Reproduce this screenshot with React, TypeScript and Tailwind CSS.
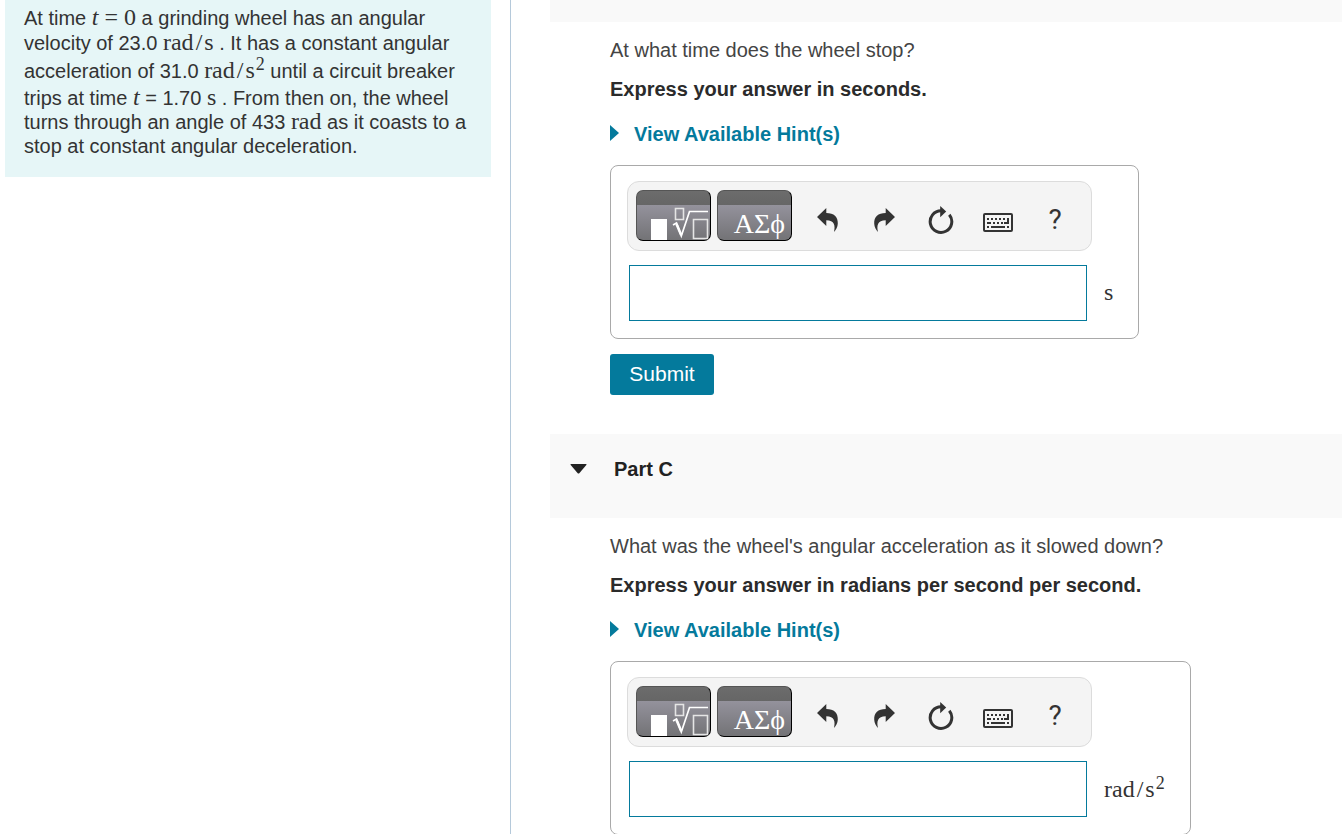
import type { ReactNode } from "react";

function Unit({ squared = false }: { squared?: boolean }) {
  return (
    <span className={squared ? "inline-block pt-[3px] pb-1 font-['Liberation_Serif',serif] text-2xl leading-6 text-[#333]" : "inline-block font-['Liberation_Serif',serif] text-2xl leading-6 text-[#333]"}>
      rad<span className="mx-0.5">/</span>s
      {squared && <sup className="relative -top-2 ml-px align-baseline text-lg leading-0">2</sup>}
    </span>
  );
}

function Symbol({ children, italic = false }: { children: ReactNode; italic?: boolean }) {
  return (
    <span className={italic ? "font-['Liberation_Serif',serif] text-2xl leading-0 text-[#333] italic" : "font-['Liberation_Serif',serif] text-2xl leading-0 text-[#333]"}>
      {children}
    </span>
  );
}

function TemplateIcon() {
  return (
    <svg viewBox="0 0 73 49" className="block h-full w-full" fill="none" stroke="#fff" aria-hidden="true">
      <path d="M14 28h16v21H14z" fill="#fff" stroke="none" />
      <path d="M38.500 17.500h8v11h-8z" stroke="#e5e5e5" strokeWidth="1.6" />
      <path d="M36 34l3.500-2 4.800 13L52.500 20.500H71" strokeWidth="1.7" />
      <path d="M39.500 33l4.700 11" strokeWidth="2.6" />
      <path d="M56.500 28.500h14v19h-14z" stroke="#e5e5e5" strokeWidth="1.6" />
    </svg>
  );
}

function UndoIcon({ flip = false }: { flip?: boolean }) {
  return (
    <svg viewBox="0 0 21 24" className={flip ? "h-6 w-[21px] -scale-x-100" : "h-6 w-[21px]"} fill="#333" aria-hidden="true">
      <path d="M0 9L9.300 0V5C17 5 21 9 20.800 15.500C20.700 19 19 22 17 24C18.500 17.500 17.500 12.300 9.300 12.300V18z" />
    </svg>
  );
}

function ResetIcon() {
  return (
    <svg viewBox="0 0 26 28" className="h-7 w-[26px]" aria-hidden="true">
      <path d="M13 4.800A10.800 10.800 0 1 0 21.300 8.700" fill="none" stroke="#333" strokeWidth="3" />
      <path d="M12.200 0v11.200l6-5.800z" fill="#333" />
    </svg>
  );
}

function KeyboardIcon() {
  return (
    <svg viewBox="0 0 30 19" className="h-[19px] w-[30px]" fill="none" stroke="#333" aria-hidden="true">
      <rect x="1" y="1" width="28" height="17" rx="1" strokeWidth="2" />
      <path d="M4 6h18M4 14h2M24 14h2" strokeWidth="2" strokeDasharray="2 2" />
      <path d="M4 10h4M10 10h2M14 10h2M18 10h2M8 14h14M21 10h5M25 5v6" strokeWidth="2" />
    </svg>
  );
}

const paletteClass =
  "h-[51px] w-[75px] shrink-0 rounded-[7px] border border-t-[#555] border-l-[#555] border-r-black border-b-black bg-[linear-gradient(#6c6c6c_0,#666_14px,#94929c_14px,#737376_100%)]";
const toolClass = "flex h-10 w-14 shrink-0 items-center justify-center";

function AnswerBox({ id, unit }: { id: string; unit: ReactNode }) {
  return (
    <div className="w-fit rounded-lg border border-[#a9a9a9] px-4 pt-[15px] pb-[17px]">
      <div role="toolbar" aria-label="Equation tools" className="flex h-[70px] w-[465px] items-start rounded-xl border border-[#dcdcdc] bg-[#f4f4f4] px-2 pt-2">
        <button aria-label="Templates" className={paletteClass}><TemplateIcon /></button>
        <button aria-label="Symbols" className={`${paletteClass} ml-1.5 flex items-end justify-end pr-1.5 font-['Liberation_Serif',serif] text-[28px] leading-8 text-white`}>
          ΑΣϕ
        </button>
        <div className="ml-[7px] flex items-center gap-px pt-2.5">
          <button aria-label="Undo" className={toolClass}><UndoIcon /></button>
          <button aria-label="Redo" className={toolClass}><UndoIcon flip /></button>
          <button aria-label="Reset" className={toolClass}><ResetIcon /></button>
          <button aria-label="Keyboard" className={`${toolClass} pt-1`}><KeyboardIcon /></button>
          <button aria-label="Help" className={`${toolClass} font-['Roboto',sans-serif] text-[28px] text-[#333]`}>?</button>
        </div>
      </div>
      <div className="mt-3.5 flex items-center pr-[9px] pl-0.5">
        <input id={id} aria-label="Answer" className="h-14 w-[458px] border border-[#047a9c] bg-white px-3 text-xl outline-none" />
        <label htmlFor={id} className="ml-[17px]">{unit}</label>
      </div>
    </div>
  );
}

function Question({ id, prompt, instruction, unit }: { id: string; prompt: string; instruction: string; unit: ReactNode }) {
  return (
    <div className="pt-4 pl-[60px]">
      <p className="leading-6 text-[#444]">{prompt}</p>
      <p className="mt-[15px] leading-6 font-bold text-[#2b2b2b]">{instruction}</p>
      <button className="mt-[21px] mb-[19px] flex items-center leading-6 font-bold text-[#047a9c]">
        <svg viewBox="0 0 9 16" className="mr-[15px] mb-0.5 h-4 w-[9px]" fill="currentColor" aria-hidden="true"><path d="M0 0l9 8-9 8z" /></svg>
        View Available Hint(s)
      </button>
      <AnswerBox id={id} unit={unit} />
    </div>
  );
}

export default function App() {
  return (
    <div className="flex h-screen overflow-hidden bg-white font-['Liberation_Sans',Arial,sans-serif] text-xl">
      <aside className="w-[511px] shrink-0 border-r border-[#b5c9da] pr-[19px] pl-[5px]">
        <p className="bg-[#e6f6f7] px-[19px] pt-1.5 pb-[19px] leading-6 text-[#333]">
          At time <Symbol italic>t</Symbol><span className="mx-1.5"><Symbol>=</Symbol></span><Symbol>0</Symbol> a grinding wheel has an angular<br />
          velocity of 23.0 <Unit /> . It has a constant angular<br />
          acceleration of 31.0 <Unit squared /> until a circuit breaker<br />
          trips at time <Symbol italic>t</Symbol> = 1.70 <Symbol>s</Symbol> . From then on, the wheel<br />
          turns through an angle of 433 <Symbol>rad</Symbol> as it coasts to a<br />
          stop at constant angular deceleration.
        </p>
      </aside>
      <main className="min-w-0 flex-1 pl-[39px]">
        <div className="h-[22px] bg-[#f9f9f9]" />
        <Question id="part-b" prompt="At what time does the wheel stop?" instruction="Express your answer in seconds." unit={<Symbol>s</Symbol>} />
        <div className="mt-[15px] pl-[60px]">
          <button className="h-[41px] w-[104px] rounded-[3px] bg-[#047a9c] pb-0.5 text-[21px] text-white">Submit</button>
        </div>
        <section className="mt-[39px]">
          <h2 className="h-[84px] bg-[#f9f9f9] pt-[23px] pl-5 text-xl leading-6 font-bold text-[#222]">
            <button className="flex items-center gap-[27px]">
              <svg viewBox="0 0 17 10" className="h-2.5 w-[17px]" fill="currentColor" aria-hidden="true"><path d="M1 0h15q1 0 .3 1L9.500 9q-1 1-2 0L.7 1Q0 0 1 0z" /></svg>
              Part C
            </button>
          </h2>
          <Question id="part-c" prompt="What was the wheel's angular acceleration as it slowed down?" instruction="Express your answer in radians per second per second." unit={<Unit squared />} />
        </section>
      </main>
    </div>
  );
}
